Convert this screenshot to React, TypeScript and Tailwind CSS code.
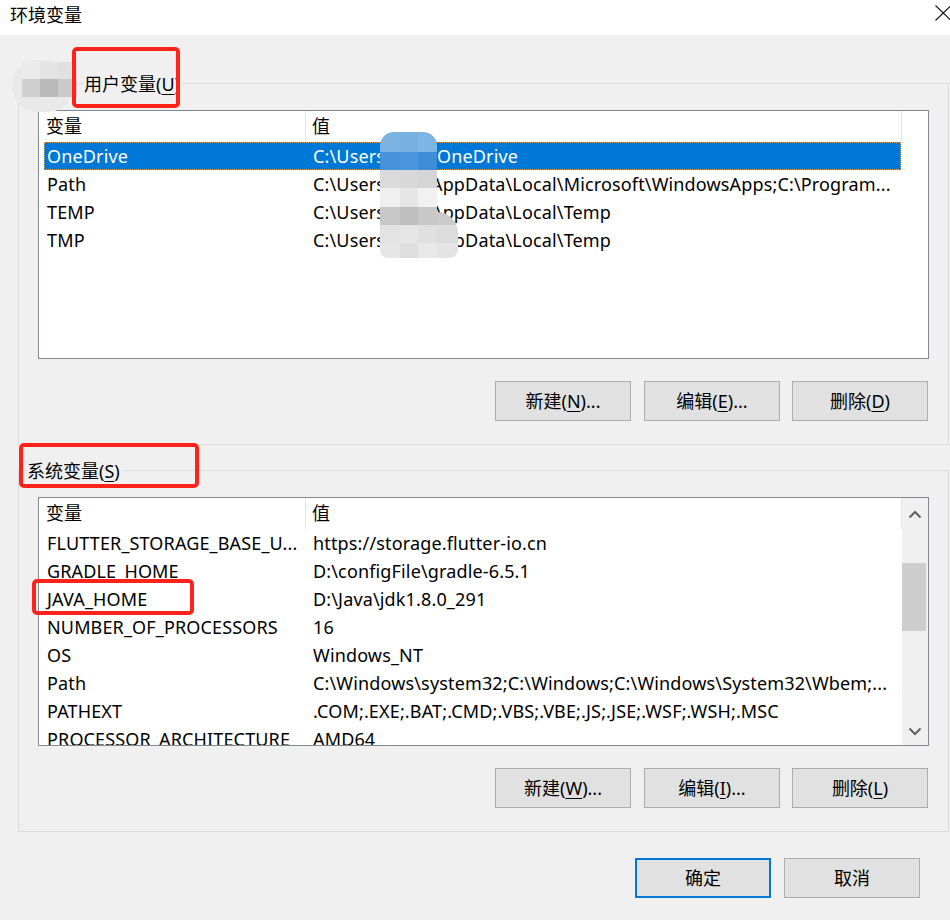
import React from "react";

type Row = { name: string; value: React.ReactNode };

const userRows: Row[] = [
  {
    name: "OneDrive",
    value: (
      <>
        <span className="inline-block w-[124px]">C:\Users</span>OneDrive
      </>
    ),
  },
  {
    name: "Path",
    value: (
      <>
        <span className="inline-block w-[118px]">C:\Users</span>AppData\Local\Microsoft\WindowsApps;C:\Program...
      </>
    ),
  },
  {
    name: "TEMP",
    value: (
      <>
        <span className="inline-block w-[118px]">C:\Users</span>AppData\Local\Temp
      </>
    ),
  },
  {
    name: "TMP",
    value: (
      <>
        <span className="inline-block w-[118px]">C:\Users</span>AppData\Local\Temp
      </>
    ),
  },
];

const sysRows: Row[] = [
  { name: "FLUTTER_STORAGE_BASE_U...", value: "https://storage.flutter-io.cn" },
  { name: "GRADLE_HOME", value: "D:\\configFile\\gradle-6.5.1" },
  { name: "JAVA_HOME", value: "D:\\Java\\jdk1.8.0_291" },
  { name: "NUMBER_OF_PROCESSORS", value: "16" },
  { name: "OS", value: "Windows_NT" },
  { name: "Path", value: "C:\\Windows\\system32;C:\\Windows;C:\\Windows\\System32\\Wbem;..." },
  { name: "PATHEXT", value: ".COM;.EXE;.BAT;.CMD;.VBS;.VBE;.JS;.JSE;.WSF;.WSH;.MSC" },
  { name: "PROCESSOR_ARCHITECTURE", value: "AMD64" },
];

function Chevron({ down }: { down?: boolean }) {
  return (
    <svg width="14" height="9" viewBox="0 0 14 9" className={down ? "rotate-180" : ""}>
      <polyline points="1.5,7.5 7,2 12.5,7.5" fill="none" stroke="#606060" strokeWidth="2" />
    </svg>
  );
}

function ListView({ rows, selected, scroll }: { rows: Row[]; selected?: number; scroll?: boolean }) {
  return (
    <div className="ml-[19px] mt-[26px] w-[891px] h-[249px] border border-[#828790] bg-white flex overflow-hidden">
      <div className="w-[863px] flex flex-col overflow-hidden">
        <div className="h-[31px] shrink-0 flex border-r border-[#e5e5e5] leading-[30px]">
          <div className="w-[267px] pl-[7px] border-r border-[#e5e5e5]">变量</div>
          <div className="flex-1 pl-[6px]">值</div>
        </div>
        {rows.map((r, i) => (
          <div
            key={i}
            className={
              "ml-[5px] w-[857px] h-[28px] shrink-0 flex whitespace-nowrap leading-[28px] tracking-[0.15px] " +
              (i === selected
                ? "bg-[#0078d7] text-white outline-1 outline-dotted outline-[#e8a050] -outline-offset-1"
                : "")
            }
          >
            <div className="w-[262px] pl-[3px] overflow-hidden">{r.name}</div>
            <div className="flex-1 pl-[7px] overflow-hidden">{r.value}</div>
          </div>
        ))}
      </div>
      {scroll ? (
        <div className="w-[26px] bg-[#f0f0f0] flex flex-col">
          <div className="h-[32px] shrink-0 flex items-center justify-center">
            <Chevron />
          </div>
          <div className="h-[33px] shrink-0" />
          <div className="h-[68px] w-[24px] shrink-0 bg-[#cdcdcd]" />
          <div className="flex-1" />
          <div className="h-[28px] shrink-0 flex items-center justify-center">
            <Chevron down />
          </div>
        </div>
      ) : (
        <div className="w-[26px] bg-white" />
      )}
    </div>
  );
}

function Btn({ children, className = "" }: { children: React.ReactNode; className?: string }) {
  return (
    <div
      className={
        "w-[136px] h-[40px] border border-[#adadad] bg-[#e1e1e1] flex items-center justify-center leading-[26px] " +
        className
      }
    >
      <span>{children}</span>
    </div>
  );
}

function U({ children }: { children: React.ReactNode }) {
  return <span className="underline underline-offset-[3px] decoration-1">{children}</span>;
}

export default function App() {
  return (
    <div className="relative w-[950px] h-[920px] overflow-hidden bg-[#f0f0f0] text-[18px] leading-[26px] text-black font-['Noto_Sans','Noto_Sans_CJK_SC',sans-serif]">
      {/* title bar */}
      <div className="h-[35px] bg-white flex items-start">
        <span className="pl-[10px] pt-[1px] font-['Noto_Sans_CJK_SC',sans-serif]">环境变量</span>
        <svg className="ml-auto mt-[5px] mr-[-2px]" width="17" height="16" viewBox="0 0 17 16">
          <line x1="0.5" y1="0.5" x2="16" y2="15.5" stroke="#111" strokeWidth="1.1" />
          <line x1="16" y1="0.5" x2="0.5" y2="15.5" stroke="#111" strokeWidth="1.1" />
        </svg>
      </div>

      <div className="pl-[18px]">
        {/* user variables */}
        <div className="relative mt-[48px] w-[931px] h-[362px] border border-[#dcdcdc]">
          <span className="absolute left-[65px] top-[-13px] h-[26px] leading-[26px] bg-[#f0f0f0] pr-[2px]">
            用户变量(<U>U</U>)
          </span>
          <ListView rows={userRows} selected={0} />
          <div className="flex mt-[22px] ml-[476px]">
            <Btn>
              新建(<U>N</U>)...
            </Btn>
            <Btn className="ml-[13px]">
              编辑(<U>E</U>)...
            </Btn>
            <Btn className="ml-[12px]">
              删除(<U>D</U>)
            </Btn>
          </div>
        </div>

        {/* system variables */}
        <div className="relative mt-[25px] w-[931px] h-[362px] border border-[#dcdcdc]">
          <span className="absolute left-[8px] top-[-13px] h-[26px] leading-[26px] bg-[#f0f0f0] pr-[4px]">
            系统变量(<U>S</U>)
          </span>
          <ListView rows={sysRows} scroll />
          <div className="flex mt-[22px] ml-[476px]">
            <Btn>
              新建(<U>W</U>)...
            </Btn>
            <Btn className="ml-[13px]">
              编辑(<U>I</U>)...
            </Btn>
            <Btn className="ml-[12px]">
              删除(<U>L</U>)
            </Btn>
          </div>
        </div>

        <div className="flex mt-[26px] ml-[617px]">
          <div className="w-[136px] h-[40px] border-2 border-[#0078d7] bg-[#e1e1e1] flex items-center justify-center">
            确定
          </div>
          <Btn className="ml-[13px]">取消</Btn>
        </div>
      </div>

      {/* privacy blur near legend */}
      <div className="absolute left-[12px] top-[60px] w-[62px] h-[52px] rounded-full bg-[#e9e9e9]" />
      <div className="absolute left-[22px] top-[62px] grid grid-cols-[18px_18px_19px] grid-rows-[17px_18px]">
        <div className="bg-[#ebebeb]" />
        <div className="bg-[#e4e4e4]" />
        <div className="bg-[#e0e0e0]" />
        <div className="bg-[#cfcfcf]" />
        <div className="bg-[#b9b9b9]" />
        <div className="bg-[#cacaca]" />
      </div>

      {/* privacy blur in list */}
      <div className="absolute left-[380px] top-[132px] w-[57px] h-[126px] rounded-t-[14px] rounded-bl-[8px] overflow-hidden grid grid-cols-[20px_18px_19px] grid-rows-[20px_18px_18px_19px_18px_18px_15px]">
        <div className="bg-[#7db3e3]" />
        <div className="bg-[#78b0e2]" />
        <div className="bg-[#7fb5e4]" />
        <div className="bg-[#4792da]" />
        <div className="bg-[#4a95dc]" />
        <div className="bg-[#3f8dd8]" />
        <div className="bg-[#dadada]" />
        <div className="bg-[#d8d8d8]" />
        <div className="bg-[#d5d5d5]" />
        <div className="bg-[#efefef]" />
        <div className="bg-[#e6e6e6]" />
        <div className="bg-[#f1f1f1]" />
        <div className="bg-[#c7c7c7]" />
        <div className="bg-[#bfbfbf]" />
        <div className="bg-[#c8c8c8]" />
        <div className="bg-[#e3e3e3]" />
        <div className="bg-[#e6e6e6]" />
        <div className="bg-[#e0e0e0]" />
        <div className="bg-[#e6e6e6]" />
        <div className="bg-[#dedede]" />
        <div className="bg-[#e8e8e8]" />
      </div>
      <div className="absolute left-[437px] top-[212px] w-[21px] h-[46px] rounded-tr-[30px] rounded-br-[12px] overflow-hidden flex flex-col">
        <div className="h-[13px] bg-[#cbcbcb]" />
        <div className="h-[18px] bg-[#dcdcdc]" />
        <div className="flex-1 bg-[#e4e4e4]" />
      </div>

      {/* red annotation boxes */}
      <div className="absolute left-[72px] top-[47px] w-[108px] h-[61px] border-[4px] border-[#ff2319] rounded-[5px]" />
      <div className="absolute left-[19px] top-[443px] w-[180px] h-[45px] border-[4px] border-[#ff2319] rounded-[5px]" />
      <div className="absolute left-[32px] top-[579px] w-[162px] h-[36px] border-[4px] border-[#ff2319] rounded-[5px]" />
    </div>
  );
}
